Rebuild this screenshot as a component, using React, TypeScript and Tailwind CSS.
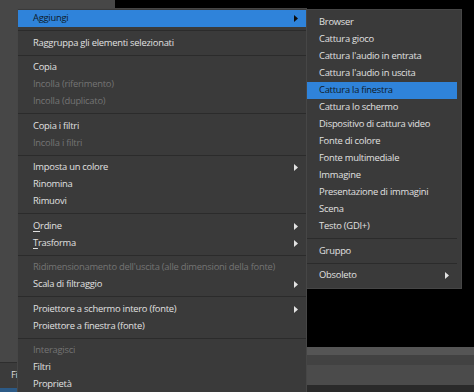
type Item =
  | { sep: true }
  | { sep?: false; label: string; u?: number; disabled?: boolean; arrow?: boolean; active?: boolean };

const mainItems: Item[] = [
  { label: "Aggiungi", arrow: true, active: true },
  { sep: true },
  { label: "Raggruppa gli elementi selezionati" },
  { sep: true },
  { label: "Copia" },
  { label: "Incolla (riferimento)", disabled: true },
  { label: "Incolla (duplicato)", disabled: true },
  { sep: true },
  { label: "Copia i filtri" },
  { label: "Incolla i filtri", disabled: true },
  { sep: true },
  { label: "Imposta un colore", arrow: true },
  { label: "Rinomina" },
  { label: "Rimuovi" },
  { sep: true },
  { label: "Ordine", arrow: true, u: 0 },
  { label: "Trasforma", arrow: true, u: 0 },
  { sep: true },
  { label: "Ridimensionamento dell'uscita (alle dimensioni della fonte)", disabled: true },
  { label: "Scala di filtraggio", arrow: true },
  { sep: true },
  { label: "Proiettore a schermo intero (fonte)", arrow: true },
  { label: "Proiettore a finestra (fonte)" },
  { sep: true },
  { label: "Interagisci", disabled: true },
  { label: "Filtri" },
  { label: "Proprietà" },
];

const subItems: Item[] = [
  { label: "Browser" },
  { label: "Cattura gioco" },
  { label: "Cattura l'audio in entrata" },
  { label: "Cattura l'audio in uscita" },
  { label: "Cattura la finestra", active: true },
  { label: "Cattura lo schermo" },
  { label: "Dispositivo di cattura video" },
  { label: "Fonte di colore" },
  { label: "Fonte multimediale" },
  { label: "Immagine" },
  { label: "Presentazione di immagini" },
  { label: "Scena" },
  { label: "Testo (GDI+)" },
  { sep: true },
  { label: "Gruppo" },
  { sep: true },
  { label: "Obsoleto", arrow: true },
];

function Arrow({ dark }: { dark?: boolean }) {
  return (
    <svg width="4" height="7" viewBox="0 0 4 7" className="shrink-0">
      <path d="M0 0 L4 3.5 L0 7 Z" fill={dark ? "#0d0d0d" : "#e2e2e2"} />
    </svg>
  );
}

function Label({ text, u }: { text: string; u?: number }) {
  if (u === undefined) return <>{text}</>;
  return (
    <>
      {text.slice(0, u)}
      <span className="underline underline-offset-2">{text[u]}</span>
      {text.slice(u + 1)}
    </>
  );
}

function Menu({ items, pad }: { items: Item[]; pad: string }) {
  return (
    <>
      {items.map((it, i) =>
        it.sep ? (
          <div key={i} className="flex h-[7.5px] items-center">
            <div className="h-px w-full bg-[#2b2b2b]" />
          </div>
        ) : (
          <div
            key={i}
            className={`flex h-[17px] items-center justify-between pr-[8px] ${pad} ${
              it.active ? "bg-[#2f83da] text-[#0e1a28]" : it.disabled ? "text-[#747474]" : "text-[#e0e0e0]"
            }`}
          >
            <span className="whitespace-nowrap">
              <Label text={it.label} u={it.u} />
            </span>
            {it.arrow && <Arrow dark={it.active} />}
          </div>
        )
      )}
    </>
  );
}

export default function App() {
  return (
    <div
      className="relative h-[392px] w-[474px] overflow-hidden bg-[#444444] text-[9.4px] tracking-[-0.25px]"
      style={{ fontFamily: '"Open Sans", "Noto Sans", sans-serif' }}
    >
      {/* background windows */}
      <div className="flex h-full">
        <div className="flex w-[115px] flex-col">
          <div className="h-[362px] bg-[#474747]" />
          <div className="h-px bg-[#2e2e2e]" />
          <div className="flex h-[25px] items-center bg-[#3b3b3b] pl-[11px] text-[#dddddd]">Fi</div>
          <div className="flex-1 bg-[#2c5a86]" />
        </div>
        <div className="flex flex-1 flex-col">
          <div className="h-[347px] bg-black" />
          <div className="h-[8px] bg-[#555555]" />
          <div className="h-[10px] bg-[#424242]" />
          <div className="h-[20px] bg-[#4b4b4b]" />
          <div className="flex-1 bg-[#2a2a2a]" />
        </div>
      </div>

      {/* main context menu */}
      <div className="absolute left-[17px] top-[8px] w-[290px] border border-[#464646] bg-[#3a3a3a] pt-px pb-2">
        <Menu items={mainItems} pad="pl-[15px]" />
      </div>

      {/* submenu */}
      <div className="absolute left-[306px] top-[9px] w-[156px] border border-[#464646] bg-[#3a3a3a] py-[4px] pr-[4px]">
        <Menu items={subItems} pad="pl-[12px]" />
      </div>
    </div>
  );
}
